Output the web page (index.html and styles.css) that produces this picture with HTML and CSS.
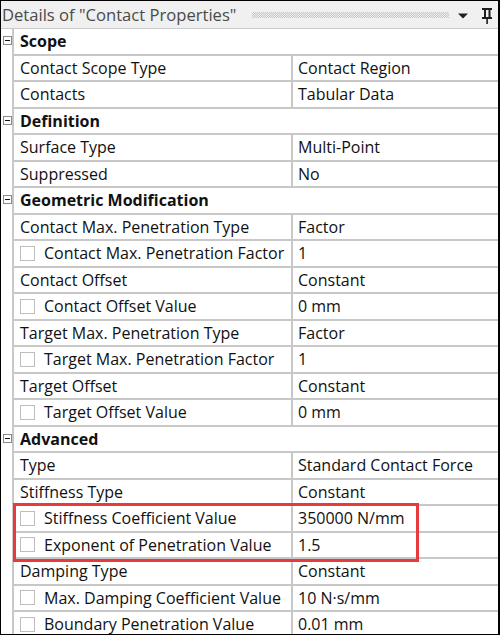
FILE: index.html
```html
<!DOCTYPE html>
<html>
<head>
<meta charset="utf-8">
<link rel="stylesheet" href="styles.css">
</head>
<body>
<div class="panel">
  <div class="titlebar">
    <span class="title">Details of "Contact Properties"</span>
    <span class="grip"></span>
    <svg class="drop" width="12" height="8" viewBox="0 0 12 8"><path d="M1 1.5 H11 L6 6.5 Z" fill="#1e1e1e"/></svg>
    <svg class="pin" width="12" height="18" viewBox="0 0 12 18">
      <rect x="1" y="2" width="10" height="2" fill="#1e1e1e"/>
      <rect x="3" y="4" width="2" height="8" fill="#1e1e1e"/>
      <rect x="7.5" y="4" width="2" height="8" fill="#1e1e1e"/>
      <rect x="1" y="11" width="10" height="2" fill="#1e1e1e"/>
      <rect x="5.3" y="13" width="1.6" height="5" fill="#1e1e1e"/>
    </svg>
  </div>
  <div class="grid">
    <div class="gut"><span class="minus"></span></div><div class="hdr">Scope</div>
    <div class="gut"></div><div class="name">Contact Scope Type</div><div class="val">Contact Region</div>
    <div class="gut"></div><div class="name">Contacts</div><div class="val">Tabular Data</div>

    <div class="gut"><span class="minus"></span></div><div class="hdr">Definition</div>
    <div class="gut"></div><div class="name">Surface Type</div><div class="val">Multi-Point</div>
    <div class="gut"></div><div class="name">Suppressed</div><div class="val">No</div>

    <div class="gut"><span class="minus"></span></div><div class="hdr">Geometric Modification</div>
    <div class="gut"></div><div class="name">Contact Max. Penetration Type</div><div class="val">Factor</div>
    <div class="gut"></div><div class="name"><span class="cb"></span>Contact Max. Penetration Factor</div><div class="val">1</div>
    <div class="gut"></div><div class="name">Contact Offset</div><div class="val">Constant</div>
    <div class="gut"></div><div class="name"><span class="cb"></span>Contact Offset Value</div><div class="val">0 mm</div>
    <div class="gut"></div><div class="name">Target Max. Penetration Type</div><div class="val">Factor</div>
    <div class="gut"></div><div class="name"><span class="cb"></span>Target Max. Penetration Factor</div><div class="val">1</div>
    <div class="gut"></div><div class="name">Target Offset</div><div class="val">Constant</div>
    <div class="gut"></div><div class="name"><span class="cb"></span>Target Offset Value</div><div class="val">0 mm</div>

    <div class="gut"><span class="minus"></span></div><div class="hdr">Advanced</div>
    <div class="gut"></div><div class="name">Type</div><div class="val">Standard Contact Force</div>
    <div class="gut"></div><div class="name">Stiffness Type</div><div class="val">Constant</div>
    <div class="gut"></div><div class="name"><span class="cb"></span>Stiffness Coefficient Value</div><div class="val">350000 N/mm</div>
    <div class="gut"></div><div class="name"><span class="cb"></span>Exponent of Penetration Value</div><div class="val">1.5</div>
    <div class="gut"></div><div class="name">Damping Type</div><div class="val">Constant</div>
    <div class="gut"></div><div class="name"><span class="cb"></span>Max. Damping Coefficient Value</div><div class="val">10 N·s/mm</div>
    <div class="gut"></div><div class="name"><span class="cb"></span>Boundary Penetration Value</div><div class="val">0.01 mm</div>
  </div>
  <div class="highlight"></div>
</div>
</body>
</html>
```

FILE: styles.css
```css
html, body {
  margin: 0;
  padding: 0;
  background: #ffffff;
}

.panel {
  position: relative;
  box-sizing: border-box;
  width: 500px;
  height: 635px;
  border: 1px solid #000;
  border-right-width: 2px;
  overflow: hidden;
  font-family: "Open Sans", "Noto Sans", sans-serif;
  font-size: 16px;
  color: #111;
  background: #fff;
}

.titlebar {
  display: flex;
  align-items: center;
  height: 27px;
  background: #f0f0f0;
  border-bottom: 1px solid #c9c9c9;
  padding-left: 1px;
  padding-right: 4px;
}

.title {
  font-size: 16.6px;
  color: #4a4a4a;
  white-space: nowrap;
}

.grip {
  flex: 1;
  height: 6px;
  margin: 0 8px 0 16px;
  background-image:
    linear-gradient(45deg, #c4c4c4 25%, transparent 25%, transparent 75%, #c4c4c4 75%),
    linear-gradient(45deg, #c4c4c4 25%, transparent 25%, transparent 75%, #c4c4c4 75%);
  background-size: 2px 2px;
  background-position: 0 0, 1px 1px;
}

.drop {
  margin-right: 12px;
  margin-top: 2px;
}

.pin {
  margin-right: 1px;
}

.grid {
  display: grid;
  grid-template-columns: 13px 279px 1fr;
  grid-auto-rows: 26.5px;
}

.gut {
  border-right: 2px solid #c8c8c8;
  position: relative;
}

.minus {
  position: absolute;
  left: 2px;
  top: 7px;
  width: 9px;
  height: 9px;
  box-sizing: border-box;
  border: 1px solid #8a8a8a;
  background: #fff;
}

.minus::after {
  content: "";
  position: absolute;
  left: 1px;
  right: 1px;
  top: 3px;
  height: 1px;
  background: #111;
}

.hdr, .name, .val {
  display: flex;
  align-items: center;
  white-space: nowrap;
  overflow: hidden;
  border-bottom: 2px solid #c8c8c8;
  box-sizing: border-box;
}

.hdr {
  grid-column: 2 / 4;
  font-weight: bold;
  padding-left: 6px;
}

.name {
  padding-left: 6px;
  border-right: 2px solid #c8c8c8;
}

.val {
  padding-left: 5px;
}

.cb {
  display: inline-block;
  width: 15px;
  height: 15px;
  box-sizing: border-box;
  border: 1px solid #bdbdbd;
  background: #fff;
  margin-right: 9px;
  flex: none;
}

.highlight {
  position: absolute;
  left: 12px;
  top: 502px;
  width: 406px;
  height: 59px;
  box-sizing: border-box;
  border: 3px solid #e8393c;
  pointer-events: none;
}
```
